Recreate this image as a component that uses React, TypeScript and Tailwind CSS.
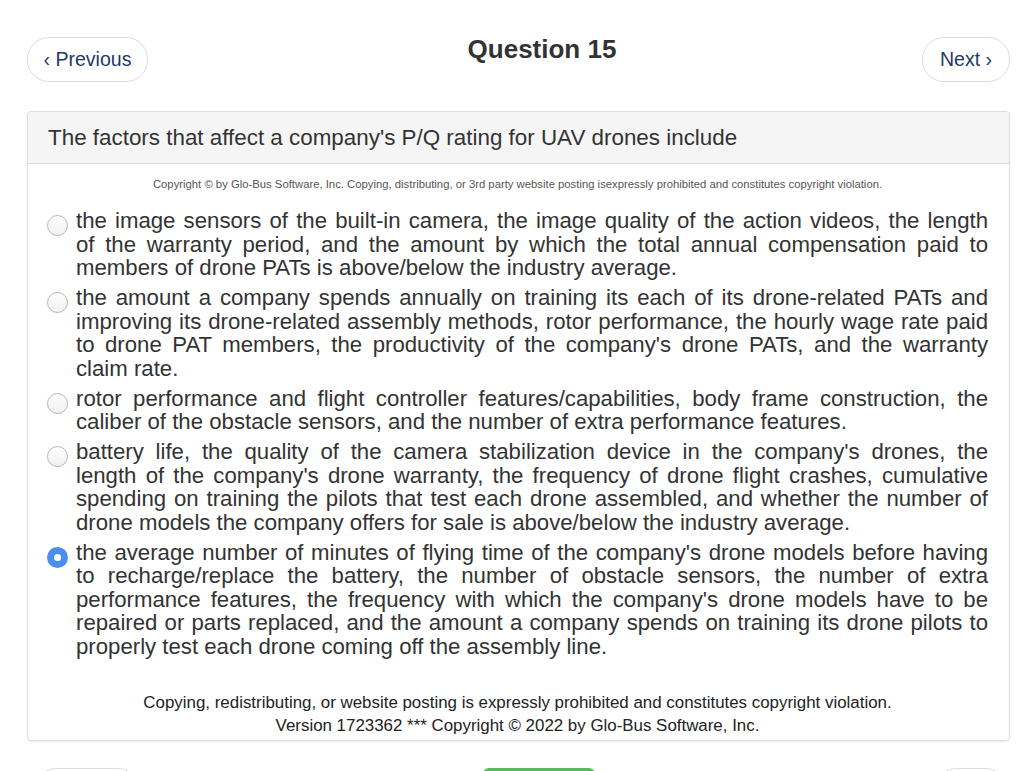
import React from "react";

// each answer is laid out with the same line breaks as the original page
const options: string[][] = [
  [
    "the image sensors of the built-in camera, the image quality of the action videos, the length",
    "of the warranty period, and the amount by which the total annual compensation paid to",
    "members of drone PATs is above/below the industry average.",
  ],
  [
    "the amount a company spends annually on training its each of its drone-related PATs and",
    "improving its drone-related assembly methods, rotor performance, the hourly wage rate paid",
    "to drone PAT members, the productivity of the company's drone PATs, and the warranty",
    "claim rate.",
  ],
  [
    "rotor performance and flight controller features/capabilities, body frame construction, the",
    "caliber of the obstacle sensors, and the number of extra performance features.",
  ],
  [
    "battery life, the quality of the camera stabilization device in the company's drones, the",
    "length of the company's drone warranty, the frequency of drone flight crashes, cumulative",
    "spending on training the pilots that test each drone assembled, and whether the number of",
    "drone models the company offers for sale is above/below the industry average.",
  ],
  [
    "the average number of minutes of flying time of the company's drone models before having",
    "to recharge/replace the battery, the number of obstacle sensors, the number of extra",
    "performance features, the frequency with which the company's drone models have to be",
    "repaired or parts replaced, and the amount a company spends on training its drone pilots to",
    "properly test each drone coming off the assembly line.",
  ],
];

function Radio({ checked }: { checked: boolean }) {
  if (checked) {
    return (
      <span className="mt-[6px] flex h-[21px] w-[21px] shrink-0 items-center justify-center rounded-full bg-[#4a8ff0]">
        <span className="h-[7px] w-[7px] rounded-full bg-white" />
      </span>
    );
  }
  return (
    <span className="mt-[6px] h-[21px] w-[21px] shrink-0 rounded-full border border-[#b5b5b5] bg-gradient-to-b from-white to-[#f0f0f0]" />
  );
}

export default function App() {
  const selected = 4;
  return (
    <div
      className="min-h-screen overflow-hidden bg-white pl-[27px] pr-[14px] pt-[37px] text-[#333]"
      style={{ fontFamily: '"Liberation Sans", Arial, sans-serif' }}
    >
      <div className="flex h-[45px] items-start justify-between">
        <button className="flex h-[45px] w-[121px] items-center justify-center rounded-[22px] border border-[#dcdcdc] bg-white text-[19.5px] text-[#1c3a68]">
          ‹ Previous
        </button>
        <h1 className="ml-[14px] mt-[-3px] text-[26px] font-bold leading-[30px] text-[#333]">Question 15</h1>
        <button className="flex h-[45px] w-[88px] items-center justify-center rounded-[22px] border border-[#dcdcdc] bg-white text-[19.5px] text-[#1c3a68]">
          Next ›
        </button>
      </div>

      <div className="mt-[29px] rounded-[4px] border border-[#dddddd] shadow-[0_1px_2px_rgba(0,0,0,0.08)]">
        <div className="flex h-[52px] items-center rounded-t-[4px] border-b border-[#dddddd] bg-[#f5f5f5] px-[20px] text-[22.4px]">
          The factors that affect a company's P/Q rating for UAV drones include
        </div>
        <div className="pl-[19px] pr-[21px]">
          <p className="pt-[13px] text-center text-[11.3px] leading-[14px] text-[#555]">
            Copyright © by Glo-Bus Software, Inc. Copying, distributing, or 3rd party website posting isexpressly prohibited and constitutes copyright violation.
          </p>
          <div className="mt-[18px] flex flex-col gap-[6.5px]">
            {options.map((lines, i) => (
              <label key={i} className="flex gap-[8px]">
                <Radio checked={i === selected} />
                <span className="min-w-0 flex-1 text-[22.2px] leading-[23.5px] text-[#333]">
                  {lines.map((l, j) => (
                    <span
                      key={j}
                      className={
                        j < lines.length - 1
                          ? "block whitespace-nowrap text-justify [text-align-last:justify]"
                          : "block whitespace-nowrap"
                      }
                    >
                      {l}
                    </span>
                  ))}
                </span>
              </label>
            ))}
          </div>
          <div className="mt-[33px] pb-[3px] text-center text-[16.9px] leading-[23px] text-[#222]">
            <p>Copying, redistributing, or website posting is expressly prohibited and constitutes copyright violation.</p>
            <p>Version 1723362 *** Copyright © 2022 by Glo-Bus Software, Inc.</p>
          </div>
        </div>
      </div>

      <div className="mt-[27px] flex">
        <div className="ml-[9px] h-[40px] w-[102px] rounded-[20px] border border-[#dcdcdc] bg-white" />
        <div className="ml-[345px] h-[40px] w-[112px] rounded-[6px] bg-[#5cb85c]" />
        <div className="ml-auto mr-[4px] h-[40px] w-[70px] rounded-[20px] border border-[#dcdcdc] bg-white" />
      </div>
    </div>
  );
}
